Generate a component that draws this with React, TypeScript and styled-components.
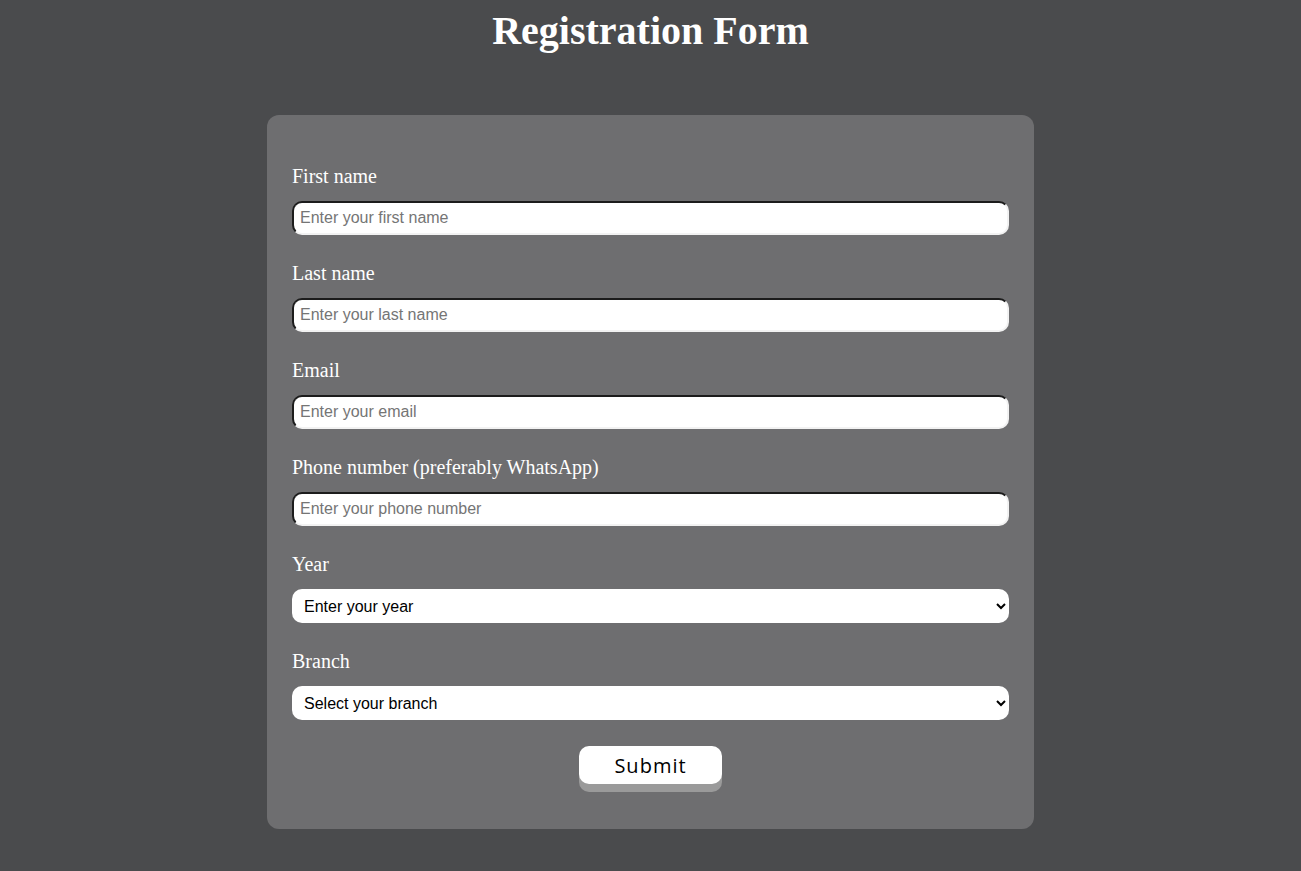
import React from "react";
import styled, { createGlobalStyle } from "styled-components";

const Global = createGlobalStyle`
  html, body {
    margin: 0;
    padding: 0;
    background: #4a4b4d;
  }
  body {
    font-family: "Liberation Serif", "Times New Roman", serif;
  }
`;

const Page = styled.div`
  display: flex;
  flex-direction: column;
  align-items: center;
  padding-top: 8px;
  min-height: 871px;
  box-sizing: border-box;
`;

const Title = styled.h1`
  margin: 0;
  font-family: "Liberation Serif", "Times New Roman", serif;
  font-size: 40px;
  font-weight: 700;
  color: #ffffff;
  line-height: 46px;
`;

const Card = styled.form`
  margin-top: 61px;
  width: 767px;
  box-sizing: border-box;
  background: #6e6e70;
  border-radius: 12px;
  padding: 50px 25px 45px 25px;
  display: flex;
  flex-direction: column;
`;

const Field = styled.div`
  display: flex;
  flex-direction: column;
  gap: 13px;
  margin-bottom: 27px;
`;

const Label = styled.label`
  font-family: "Liberation Serif", "Times New Roman", serif;
  font-size: 20px;
  line-height: 23px;
  color: #ffffff;
`;

const TextInput = styled.input`
  box-sizing: border-box;
  width: 100%;
  height: 34px;
  margin: 0;
  padding: 0 6px;
  border-width: 2px;
  border-style: solid;
  border-color: #1c1c1c #f2f2f2 #f2f2f2 #1c1c1c;
  border-radius: 10px;
  background: #ffffff;
  font-family: "Liberation Sans", Arial, sans-serif;
  font-size: 16px;
  color: #000;
  outline: none;
  &::placeholder {
    color: #757575;
  }
`;

const Select = styled.select`
  box-sizing: border-box;
  width: 100%;
  height: 34px;
  margin: 0;
  padding: 0 6px 0 8px;
  border: none;
  border-radius: 10px;
  background: #ffffff;
  font-family: "Liberation Sans", Arial, sans-serif;
  font-size: 16px;
  color: #000;
  outline: none;
`;

const ButtonRow = styled.div`
  display: flex;
  justify-content: center;
  margin-top: -1px;
`;

const SubmitButton = styled.button`
  width: 143px;
  height: 38px;
  border: none;
  border-radius: 10px;
  background: #ffffff;
  box-shadow: 0 8px 0 #9a9a9a;
  font-family: "Open Sans", "Noto Sans", sans-serif;
  font-size: 20px;
  letter-spacing: 1px;
  color: #000;
  cursor: pointer;
  padding: 0;
`;

const fields = [
  { label: "First name", placeholder: "Enter your first name", type: "text" },
  { label: "Last name", placeholder: "Enter your last name", type: "text" },
  { label: "Email", placeholder: "Enter your email", type: "email" },
  {
    label: "Phone number (preferably WhatsApp)",
    placeholder: "Enter your phone number",
    type: "tel",
  },
];

export default function App() {
  return (
    <>
      <Global />
      <Page>
        <Title>Registration Form</Title>
        <Card onSubmit={(e) => e.preventDefault()}>
          {fields.map((f) => (
            <Field key={f.label}>
              <Label>{f.label}</Label>
              <TextInput type={f.type} placeholder={f.placeholder} />
            </Field>
          ))}
          <Field>
            <Label>Year</Label>
            <Select defaultValue="">
              <option value="">Enter your year</option>
              <option value="1">1st year</option>
              <option value="2">2nd year</option>
              <option value="3">3rd year</option>
              <option value="4">4th year</option>
            </Select>
          </Field>
          <Field>
            <Label>Branch</Label>
            <Select defaultValue="">
              <option value="">Select your branch</option>
              <option value="cse">CSE</option>
              <option value="ece">ECE</option>
              <option value="me">ME</option>
            </Select>
          </Field>
          <ButtonRow>
            <SubmitButton type="submit">Submit</SubmitButton>
          </ButtonRow>
        </Card>
      </Page>
    </>
  );
}
